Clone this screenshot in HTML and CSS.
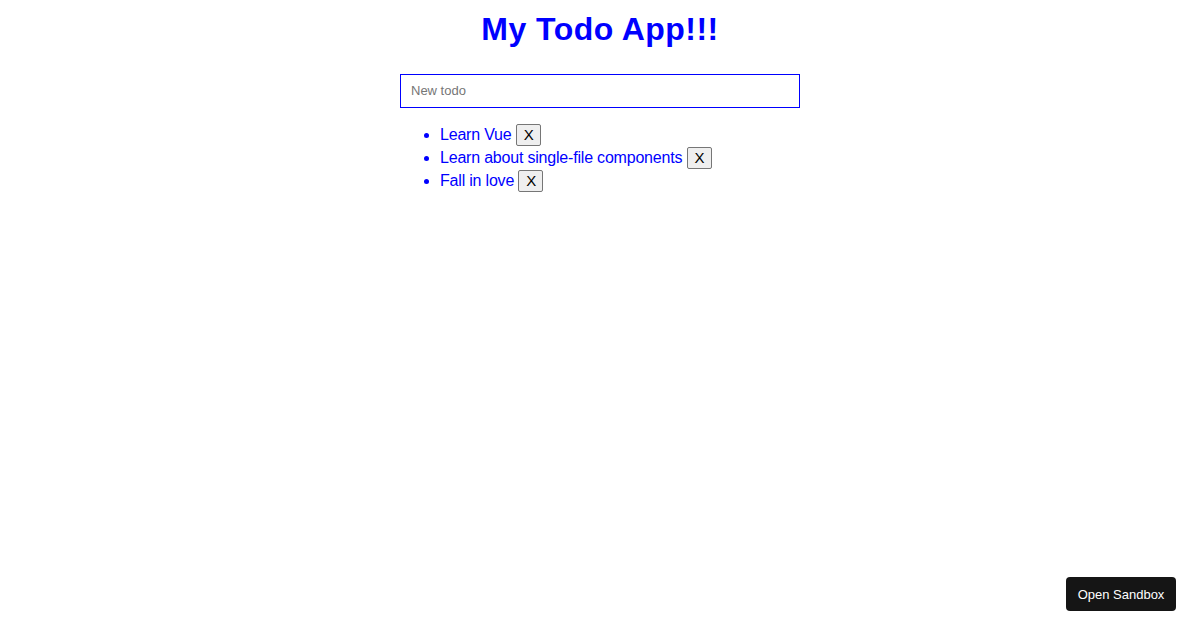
FILE: index.html
```html
<!DOCTYPE html>
<html lang="en">
<head>
<meta charset="utf-8">
<title>My Todo App</title>
<link rel="stylesheet" href="styles.css">
</head>
<body>
<div class="app">
  <h1 class="title">My Todo App!!!</h1>
  <input class="new-todo" type="text" placeholder="New todo">
  <ul class="todo-list">
    <li class="todo-item">Learn Vue <button class="remove">X</button></li>
    <li class="todo-item">Learn about single-file components <button class="remove">X</button></li>
    <li class="todo-item">Fall in love <button class="remove">X</button></li>
  </ul>
</div>
<a class="open-sandbox" href="#">Open Sandbox</a>
</body>
</html>
```

FILE: styles.css
```css
html, body {
  margin: 0;
  padding: 0;
  background: #ffffff;
}

body {
  font-family: "Liberation Sans", Arial, sans-serif;
  font-size: 16px;
  color: #0000ff;
}

.app {
  width: 400px;
  margin: 0 auto;
  padding-top: 11px;
}

.title {
  margin: 0 0 26px;
  font-size: 32px;
  font-weight: bold;
  letter-spacing: 0.45px;
  text-align: center;
  white-space: nowrap;
  color: #0000ff;
}

.new-todo {
  display: block;
  box-sizing: border-box;
  width: 400px;
  height: 34px;
  margin: 0;
  padding: 0 10px 1px;
  border: 1px solid #0000ff;
  border-radius: 0;
  font-family: "Liberation Sans", Arial, sans-serif;
  font-size: 13px;
  color: #000;
  outline: none;
}

.new-todo::placeholder {
  color: #767676;
}

.todo-list {
  margin: 15px 0 0;
  padding-left: 40px;
}

.todo-item {
  line-height: 23px;
  letter-spacing: -0.2px;
}

.remove {
  font-family: "Liberation Sans", Arial, sans-serif;
  font-size: 15px;
  letter-spacing: 0;
  color: #000;
  background: #efefef;
  border: 1px solid #767676;
  border-radius: 2px;
  padding: 1px 6px 1px 7px;
  height: 22px;
  line-height: 18px;
  vertical-align: baseline;
}

.open-sandbox {
  position: fixed;
  right: 24px;
  bottom: 19px;
  width: 110px;
  height: 34px;
  box-sizing: border-box;
  display: flex;
  align-items: center;
  justify-content: center;
  background: #151515;
  color: #ffffff;
  border-radius: 4px;
  font-family: "Liberation Sans", Arial, sans-serif;
  font-size: 13px;
  text-decoration: none;
}
```
